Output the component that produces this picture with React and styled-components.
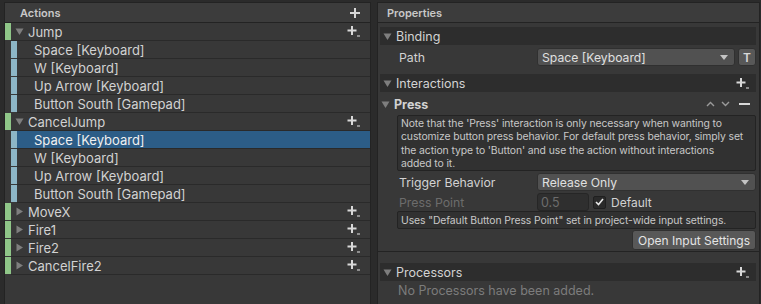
import React from 'react';
import styled, { createGlobalStyle } from 'styled-components';

const Global = createGlobalStyle`
  html, body { margin: 0; padding: 0; background: #232323; }
  body { font-family: Inter, "Noto Sans", sans-serif; font-size: 12px; color: #d2d2d2; }
`;

const Window = styled.div`
  display: flex;
  gap: 6px;
  height: 304px;
  padding: 2px 5px 0 4px;
  box-sizing: border-box;
  overflow: hidden;
  background: #2b2b2b;
`;

const Panel = styled.div`
  width: ${(p) => p.w}px;
  flex: none;
  background: #383838;
  border: 1px solid #232323;
  border-bottom: none;
  display: flex;
  flex-direction: column;
  overflow: hidden;
`;

const PanelHeader = styled.div`
  height: 19px;
  flex: none;
  display: flex;
  align-items: center;
  justify-content: space-between;
  padding: 0 9px 0 ${(p) => p.pl}px;
  background: #3c3c3c;
  border-bottom: 1px solid #232323;
  font-size: 11px;
  font-weight: 600;
  color: #c8c8c8;
`;

const TreeRow = styled.div`
  height: 18px;
  flex: none;
  display: flex;
  align-items: stretch;
`;

const Bar = styled.div`
  width: 6px;
  flex: none;
  background: ${(p) => p.c || 'transparent'};
  border-bottom: 1px solid ${(p) => (p.c ? p.c : '#383838')};
  box-sizing: border-box;
  height: ${(p) => (p.c ? '17px' : '18px')};
`;

const RowBody = styled.div`
  flex: 1;
  display: flex;
  align-items: center;
  padding-left: ${(p) => p.pl}px;
  padding-right: 9px;
  background: ${(p) => (p.sel ? '#2c5d87' : 'transparent')};
  border-bottom: 1px solid #2a2a2a;
  color: ${(p) => (p.sel ? '#f0f0f0' : '#d2d2d2')};
  font-size: 13px;
  gap: 4px;
`;

const Label = styled.span`
  flex: 1;
  white-space: nowrap;
  font-weight: ${(p) => (p.bold ? 700 : 400)};
  color: ${(p) => p.c || 'inherit'};
`;

const Tri = ({ open }) => (
  <svg width="9" height="9" viewBox="0 0 9 9" style={{ flex: 'none' }}>
    {open ? <path d="M0.5 1.5 H8.5 L4.5 8 Z" fill="#7e7e7e" /> : <path d="M1.5 0.5 V8.5 L8 4.5 Z" fill="#7e7e7e" />}
  </svg>
);

const PlusDrop = () => (
  <svg width="14" height="13" viewBox="0 0 14 13" style={{ flex: 'none' }}>
    <path d="M5 1 V10 M0.5 5.5 H9.5" stroke="#d8d8d8" strokeWidth="2" />
    <path d="M10 11 H13" stroke="#c8c8c8" strokeWidth="1.2" />
  </svg>
);

const Plus = () => (
  <svg width="12" height="12" viewBox="0 0 12 12" style={{ flex: 'none' }}>
    <path d="M6 1 V11 M1 6 H11" stroke="#d8d8d8" strokeWidth="2" />
  </svg>
);

const Props = styled.div`
  flex: none;
  display: flex;
  flex-direction: column;
  padding: 3px 3px 0 2px;
  & > * { flex: none; }
`;

const Foldout = styled.div`
  height: 18px;
  display: flex;
  align-items: center;
  gap: 4px;
  padding: 0 6px 0 3px;
  margin-top: ${(p) => p.mt || 0}px;
  background: ${(p) => (p.flat ? 'transparent' : '#2d2d2d')};
  font-size: 12.5px;
`;

const Field = styled.div`
  display: flex;
  align-items: center;
  height: 18px;
  padding-left: 19px;
  margin-top: ${(p) => p.mt || 0}px;
  gap: 3px;
  font-size: 12px;
`;

const FieldLabel = styled.span`
  width: 135px;
  flex: none;
  font-size: 12.3px;
  color: ${(p) => (p.dis ? '#6c6c6c' : '#d2d2d2')};
`;

const Dropdown = styled.div`
  flex: 1;
  height: 18px;
  box-sizing: border-box;
  display: flex;
  align-items: center;
  justify-content: space-between;
  padding: 0 6px 0 4px;
  background: #515151;
  border: 1px solid #303030;
  border-radius: 3px;
  font-size: 12.2px;
  color: #e0e0e0;
`;

const Caret = () => (
  <svg width="8" height="5" viewBox="0 0 8 5"><path d="M0 0 H8 L4 5 Z" fill="#c4c4c4" /></svg>
);

const SmallBtn = styled.div`
  width: 18px;
  height: 18px;
  box-sizing: border-box;
  flex: none;
  display: flex;
  align-items: center;
  justify-content: center;
  background: #585858;
  border: 1px solid #303030;
  border-radius: 3px;
  font-weight: 600;
  font-size: 12px;
  color: #d8d8d8;
`;

const HelpBox = styled.div`
  margin: ${(p) => p.m};
  padding: ${(p) => p.pad || '1px 3px 0'};
  background: #313131;
  border: 1px solid #232323;
  border-radius: 2px;
  font-size: 10.4px;
  letter-spacing: -0.1px;
  line-height: 13.3px;
  color: #c8c8c8;
  white-space: nowrap;
  overflow: hidden;
`;

const NumField = styled.div`
  width: 52px;
  height: 18px;
  box-sizing: border-box;
  padding-left: 3px;
  display: flex;
  align-items: center;
  background: #2f2f2f;
  border: 1px solid #262626;
  border-radius: 3px;
  color: #6c6c6c;
  font-size: 12.5px;
`;

const Check = styled.div`
  width: 13px;
  height: 13px;
  box-sizing: border-box;
  margin-left: 1px;
  display: flex;
  align-items: center;
  justify-content: center;
  background: #2a2a2a;
  border: 1px solid #1f1f1f;
  border-radius: 2px;
`;

const ButtonRow = styled.div`
  display: flex;
  justify-content: flex-end;
  margin-top: 1px;
`;

const Button = styled.div`
  height: 18px;
  padding: 0 5px;
  display: flex;
  align-items: center;
  background: #585858;
  border: 1px solid #303030;
  border-radius: 3px;
  font-size: 12px;
  color: #e4e4e4;
`;

const Separator = styled.div`
  height: 1px;
  background: #232323;
  margin: 1px -3px 11px -2px;
`;

const Empty = styled.div`
  padding: 2px 0 0 18px;
  font-size: 12.5px;
  color: #7c7c7c;
`;

const Icons = styled.div`
  display: flex;
  align-items: center;
  gap: 6px;
`;

const tree = [
  { type: 'action', name: 'Jump', open: true },
  { type: 'bind', name: 'Space [Keyboard]' },
  { type: 'bind', name: 'W [Keyboard]' },
  { type: 'bind', name: 'Up Arrow [Keyboard]' },
  { type: 'bind', name: 'Button South [Gamepad]' },
  { type: 'action', name: 'CancelJump', open: true },
  { type: 'bind', name: 'Space [Keyboard]', sel: true },
  { type: 'bind', name: 'W [Keyboard]' },
  { type: 'bind', name: 'Up Arrow [Keyboard]' },
  { type: 'bind', name: 'Button South [Gamepad]' },
  { type: 'action', name: 'MoveX' },
  { type: 'action', name: 'Fire1' },
  { type: 'action', name: 'Fire2' },
  { type: 'action', name: 'CancelFire2' },
];

const pressNote = [
  "Note that the 'Press' interaction is only necessary when wanting to",
  'customize button press behavior. For default press behavior, simply set',
  "the action type to 'Button' and use the action without interactions",
  'added to it.',
];

export default function App() {
  return (
    <>
      <Global />
      <Window>
        <Panel w={365}>
          <PanelHeader pl={15}>
            <span>Actions</span>
            <Plus />
          </PanelHeader>
          {tree.map((r, i) =>
            r.type === 'action' ? (
              <TreeRow key={i}>
                <Bar c="#8fc688" />
                <RowBody pl={4}>
                  <Tri open={r.open} />
                  <Label>{r.name}</Label>
                  <PlusDrop />
                </RowBody>
              </TreeRow>
            ) : (
              <TreeRow key={i}>
                <Bar />
                <Bar c="#8db6c6" />
                <RowBody pl={17} sel={r.sel}>
                  <Label>{r.name}</Label>
                </RowBody>
              </TreeRow>
            )
          )}
        </Panel>
        <Panel w={381}>
          <PanelHeader pl={9}>
            <span>Properties</span>
          </PanelHeader>
          <Props>
            <Foldout mt={1}>
              <Tri open />
              <Label>Binding</Label>
            </Foldout>
            <Field mt={3}>
              <FieldLabel>Path</FieldLabel>
              <Dropdown>
                <span>Space [Keyboard]</span>
                <Caret />
              </Dropdown>
              <SmallBtn>T</SmallBtn>
            </Field>
            <Foldout mt={8}>
              <Tri open />
              <Label>Interactions</Label>
              <PlusDrop />
            </Foldout>
            <Foldout flat mt={3} style={{ paddingLeft: 1 }}>
              <Tri open />
              <Label bold>Press</Label>
              <Icons>
                <svg width="9" height="6" viewBox="0 0 9 6"><path d="M1 5 L4.5 1.5 L8 5" stroke="#9a9a9a" strokeWidth="1.4" fill="none" /></svg>
                <svg width="9" height="6" viewBox="0 0 9 6"><path d="M1 1 L4.5 4.5 L8 1" stroke="#9a9a9a" strokeWidth="1.4" fill="none" /></svg>
                <svg width="11" height="4" viewBox="0 0 11 4" style={{ marginLeft: 3 }}><path d="M0 2 H11" stroke="#d8d8d8" strokeWidth="2" /></svg>
              </Icons>
            </Foldout>
            <HelpBox m="2px 0 0 17px">
              {pressNote.map((line, i) => (
                <div key={i}>{line}</div>
              ))}
            </HelpBox>
            <Field mt={2}>
              <FieldLabel>Trigger Behavior</FieldLabel>
              <Dropdown>
                <span>Release Only</span>
                <Caret />
              </Dropdown>
            </Field>
            <Field mt={2}>
              <FieldLabel dis>Press Point</FieldLabel>
              <NumField>0.5</NumField>
              <Check>
                <svg width="9" height="8" viewBox="0 0 9 8"><path d="M1 4 L3.5 6.5 L8 1" stroke="#e8e8e8" strokeWidth="1.6" fill="none" /></svg>
              </Check>
              <Label style={{ marginLeft: 2 }}>Default</Label>
            </Field>
            <HelpBox m="0 0 0 17px" pad="2px 3px 1px">
              Uses "Default Button Press Point" set in project-wide input settings.
            </HelpBox>
            <ButtonRow>
              <Button>Open Input Settings</Button>
            </ButtonRow>
            <Separator />
            <Foldout>
              <Tri open />
              <Label>Processors</Label>
              <PlusDrop />
            </Foldout>
            <Empty>No Processors have been added.</Empty>
          </Props>
        </Panel>
      </Window>
    </>
  );
}
